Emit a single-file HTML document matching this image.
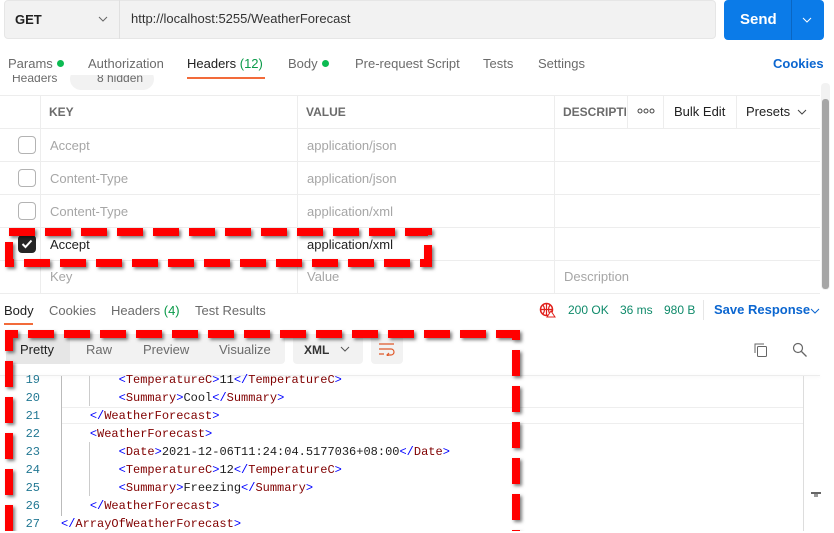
<!DOCTYPE html>
<html><head><meta charset="utf-8"><style>
*{box-sizing:border-box;margin:0;padding:0}
body{width:834px;height:531px;overflow:hidden;background:#fff;font-family:"Liberation Sans",sans-serif;font-size:13px;color:#212121;position:relative}
.a{position:absolute;white-space:nowrap}
.g{color:#6b6b6b}
.lt{color:#a6a6a6}
.vl{position:absolute;width:1px;background:#ededed}
.hl{position:absolute;height:1px;background:#ededed}
.cb{position:absolute;left:18px;width:18px;height:18px;border:1px solid #b3b3b3;border-radius:4px;background:#fff}
.code{position:absolute;font-family:"Liberation Mono",monospace;font-size:12px;white-space:pre;line-height:18px}
.n{color:#237893;text-align:right;width:40px;left:0}
.b{color:#0000ff}.t{color:#800000}
.dot{display:inline-block;width:7px;height:7px;border-radius:50%;background:#0cbb52;margin-left:4px;vertical-align:1px}
</style></head><body>
<!-- top bar -->
<div class="a" style="left:4px;top:0;width:712px;height:39px;background:#f2f2f2;border:1px solid #e6e6e6;border-radius:4px"></div>
<div class="a" style="left:119px;top:0;width:1px;height:39px;background:#e0e0e0"></div>
<div class="a" style="left:15px;top:12px;font-weight:bold;font-size:13px">GET</div>
<svg class="a" style="left:98px;top:16px" width="10" height="7"><path d="M1 1l4 4 4-4" stroke="#666" fill="none"/></svg>
<div class="a" style="left:131px;top:11px;color:#333">http://localhost:5255/WeatherForecast</div>
<div class="a" style="left:724px;top:0;width:100px;height:40px;background:#0b7be8;border-radius:4px"></div>
<div class="a" style="left:791px;top:0;width:1px;height:40px;background:#0a66c2"></div>
<div class="a" style="left:740px;top:11px;color:#fff;font-weight:bold;font-size:15px">Send</div>
<svg class="a" style="left:802px;top:17px" width="10" height="7"><path d="M1 1l4 4 4-4" stroke="#fff" fill="none"/></svg>
<!-- hidden row behind tabs -->
<div class="a g" style="left:12px;top:71px;font-size:12px">Headers</div>
<div class="a" style="left:70px;top:68px;width:84px;height:22px;background:#f2f2f2;border-radius:11px"></div>
<div class="a g" style="left:97px;top:71px;font-size:12px">8 hidden</div>
<div class="a" style="left:0;top:44px;width:834px;height:31px;background:#fff"></div>
<!-- tabs -->
<div class="a g" style="left:8px;top:56px">Params<span class="dot"></span></div>
<div class="a g" style="left:88px;top:56px">Authorization</div>
<div class="a" style="left:187px;top:56px;color:#212121">Headers <span style="color:#0a9a49">(12)</span></div>
<div class="a" style="left:187px;top:77px;width:78px;height:2px;background:#f26b3a"></div>
<div class="a g" style="left:288px;top:56px">Body<span class="dot"></span></div>
<div class="a g" style="left:355px;top:56px">Pre-request Script</div>
<div class="a g" style="left:483px;top:56px">Tests</div>
<div class="a g" style="left:538px;top:56px">Settings</div>
<div class="a" style="left:773px;top:56px;color:#0b66d0;font-weight:bold">Cookies</div>
<!-- table -->
<div class="hl" style="left:0;top:95px;width:820px"></div>
<div class="hl" style="left:0;top:128px;width:820px"></div>
<div class="hl" style="left:0;top:161px;width:820px"></div>
<div class="hl" style="left:0;top:194px;width:820px"></div>
<div class="hl" style="left:0;top:227px;width:820px"></div>
<div class="hl" style="left:0;top:260px;width:820px"></div>
<div class="hl" style="left:0;top:293px;width:820px"></div>
<div class="vl" style="left:40px;top:95px;height:198px"></div>
<div class="vl" style="left:297px;top:95px;height:198px"></div>
<div class="vl" style="left:554px;top:95px;height:198px"></div>
<div class="vl" style="left:627px;top:95px;height:33px"></div>
<div class="vl" style="left:663px;top:95px;height:33px"></div>
<div class="vl" style="left:736px;top:95px;height:33px"></div>
<div class="a" style="left:49px;top:105px;font-weight:bold;color:#6b6b6b;font-size:12px">KEY</div>
<div class="a" style="left:306px;top:105px;font-weight:bold;color:#6b6b6b;font-size:12px">VALUE</div>
<div class="a" style="left:563px;top:105px;font-weight:bold;color:#6b6b6b;font-size:12px;width:63px;overflow:hidden">DESCRIPTION</div>
<svg class="a" style="left:637px;top:108px" width="18" height="6"><circle cx="3" cy="3" r="2" stroke="#444" fill="none"/><circle cx="9" cy="3" r="2" stroke="#444" fill="none"/><circle cx="15" cy="3" r="2" stroke="#444" fill="none"/></svg>
<div class="a" style="left:674px;top:104px;font-size:13px">Bulk Edit</div>
<div class="a" style="left:746px;top:104px;font-size:13px">Presets</div>
<svg class="a" style="left:797px;top:109px" width="10" height="7"><path d="M1 1l4 4 4-4" stroke="#444" fill="none"/></svg>
<div class="cb" style="top:136px"></div>
<div class="cb" style="top:169px"></div>
<div class="cb" style="top:202px"></div>
<div class="cb" style="top:235px;background:#262626;border-color:#262626"></div>
<svg class="a" style="left:21px;top:239px" width="12" height="10"><path d="M1.5 5l3 3 6-6.5" stroke="#fff" stroke-width="2" fill="none"/></svg>
<div class="a lt" style="left:50px;top:138px">Accept</div>
<div class="a lt" style="left:307px;top:138px">application/json</div>
<div class="a lt" style="left:50px;top:171px">Content-Type</div>
<div class="a lt" style="left:307px;top:171px">application/json</div>
<div class="a lt" style="left:50px;top:204px">Content-Type</div>
<div class="a lt" style="left:307px;top:204px">application/xml</div>
<div class="a" style="left:50px;top:237px">Accept</div>
<div class="a" style="left:307px;top:237px">application/xml</div>
<div class="a lt" style="left:50px;top:269px">Key</div>
<div class="a lt" style="left:307px;top:269px">Value</div>
<div class="a lt" style="left:564px;top:269px">Description</div>
<!-- scrollbar -->
<div class="a" style="left:821px;top:83px;width:9px;height:207px;background:#f2f2f2;border-radius:4px"></div>
<div class="a" style="left:822px;top:99px;width:7px;height:190px;background:#a6a6a6;border-radius:3px"></div>
<!-- response tabs -->
<div class="a" style="left:4px;top:303px">Body</div>
<div class="a" style="left:4px;top:323px;width:29px;height:2px;background:#f26b3a"></div>
<div class="a g" style="left:49px;top:303px">Cookies</div>
<div class="a g" style="left:111px;top:303px">Headers <span style="color:#0a9a49">(4)</span></div>
<div class="a g" style="left:195px;top:303px">Test Results</div>
<svg class="a" style="left:539px;top:302px" width="17" height="16"><circle cx="7.5" cy="7.5" r="6" stroke="#e0201b" stroke-width="1.5" fill="none"/><path d="M1.5 7.5h12M7.5 1.5v12M4 3q3 4.5 0 9M11 3q-3 4.5 0 9" stroke="#e0201b" stroke-width="1.2" fill="none"/><path d="M12 9l4 6h-8z" fill="#fff" stroke="#e0201b"/></svg>
<div class="a" style="left:568px;top:303px;color:#0f8a6a;font-size:12px">200 OK</div>
<div class="a" style="left:620px;top:303px;color:#0f8a6a;font-size:12px">36 ms</div>
<div class="a" style="left:664px;top:303px;color:#0f8a6a;font-size:12px">980 B</div>
<div class="a" style="left:703px;top:300px;width:1px;height:20px;background:#e6e6e6"></div>
<div class="a" style="left:714px;top:302px;color:#0b66d0;font-weight:bold">Save Response</div>
<svg class="a" style="left:810px;top:308px" width="10" height="7"><path d="M1 1l4 4 4-4" stroke="#0b66d0" fill="none"/></svg>
<!-- toolbar -->
<div class="a" style="left:6px;top:334px;width:279px;height:30px;background:#f2f2f2;border-radius:4px"></div>
<div class="a" style="left:6px;top:334px;width:64px;height:30px;background:#e6e6e6;border-radius:4px 0 0 4px"></div>
<div class="a" style="left:20px;top:342px">Pretty</div>
<div class="a g" style="left:86px;top:342px">Raw</div>
<div class="a g" style="left:143px;top:342px">Preview</div>
<div class="a g" style="left:219px;top:342px">Visualize</div>
<div class="a" style="left:293px;top:334px;width:70px;height:30px;background:#f2f2f2;border-radius:4px"></div>
<div class="a" style="left:304px;top:343px;font-size:12px;font-weight:bold;color:#333">XML</div>
<svg class="a" style="left:340px;top:346px" width="10" height="7"><path d="M1 1l4 4 4-4" stroke="#555" fill="none"/></svg>
<div class="a" style="left:371px;top:334px;width:32px;height:30px;background:#f2f2f2;border-radius:4px"></div>
<svg class="a" style="left:378px;top:342px" width="18" height="14"><path d="M1 2h15M1 7h12a3 3 0 0 1 0 6h-4M11 11l-2 2 2 2M1 12h5" stroke="#e05a2b" stroke-width="1.2" fill="none"/></svg>
<svg class="a" style="left:752px;top:342px" width="16" height="16"><path d="M3 11V2h9" stroke="#666" fill="none"/><rect x="5.5" y="4.5" width="9" height="10" rx="1" stroke="#666" fill="none"/></svg>
<svg class="a" style="left:792px;top:342px" width="16" height="16"><circle cx="6" cy="6" r="4.5" stroke="#666" fill="none" stroke-width="1.2"/><path d="M9.5 9.5l5 5" stroke="#666" stroke-width="1.3"/></svg>
<div class="a" style="left:0;top:375px;width:820px;height:1px;background:#ececec;box-shadow:0 1px 3px rgba(0,0,0,.08)"></div>
<!-- code -->
<div class="a" style="left:61px;top:407px;width:743px;height:17px;border:1px solid #eee"></div>
<div class="a" style="left:61px;top:376px;width:1px;height:140px;background:#bbb"></div>
<div class="a" style="left:89px;top:376px;width:1px;height:30px;background:#ccc"></div>
<div class="a" style="left:89px;top:442px;width:1px;height:54px;background:#ccc"></div>
<div class="a" style="left:803px;top:376px;width:1px;height:155px;background:#ddd"></div>
<div class="a" style="left:811px;top:492px;width:10px;height:2px;background:#666"></div>
<div class="a" style="left:814px;top:494px;width:4px;height:3px;background:#999"></div>
<div class="code n" style="top:371px">19
20
21
22
23
24
25
26
27</div>
<div class="code" style="left:61px;top:371px">        <span class="b">&lt;</span><span class="t">TemperatureC</span><span class="b">&gt;</span>11<span class="b">&lt;/</span><span class="t">TemperatureC</span><span class="b">&gt;</span>
        <span class="b">&lt;</span><span class="t">Summary</span><span class="b">&gt;</span>Cool<span class="b">&lt;/</span><span class="t">Summary</span><span class="b">&gt;</span>
    <span class="b">&lt;/</span><span class="t">WeatherForecast</span><span class="b">&gt;</span>
    <span class="b">&lt;</span><span class="t">WeatherForecast</span><span class="b">&gt;</span>
        <span class="b">&lt;</span><span class="t">Date</span><span class="b">&gt;</span>2021-12-06T11:24:04.5177036+08:00<span class="b">&lt;/</span><span class="t">Date</span><span class="b">&gt;</span>
        <span class="b">&lt;</span><span class="t">TemperatureC</span><span class="b">&gt;</span>12<span class="b">&lt;/</span><span class="t">TemperatureC</span><span class="b">&gt;</span>
        <span class="b">&lt;</span><span class="t">Summary</span><span class="b">&gt;</span>Freezing<span class="b">&lt;/</span><span class="t">Summary</span><span class="b">&gt;</span>
    <span class="b">&lt;/</span><span class="t">WeatherForecast</span><span class="b">&gt;</span>
<span class="b">&lt;/</span><span class="t">ArrayOfWeatherForecast</span><span class="b">&gt;</span></div>
<!-- red dashed boxes -->
<svg class="a" style="left:0;top:0" width="834" height="531">
<defs><filter id="s"><feDropShadow dx="2" dy="2" stdDeviation="1.5" flood-opacity=".5"/></filter></defs>
<g filter="url(#s)" fill="none" stroke="#f00" stroke-width="8" stroke-dasharray="26,10">
<path d="M9 232H428V263H9Z"/>
<path d="M9 531V334H516V531"/>
</g></svg>
</body></html>
